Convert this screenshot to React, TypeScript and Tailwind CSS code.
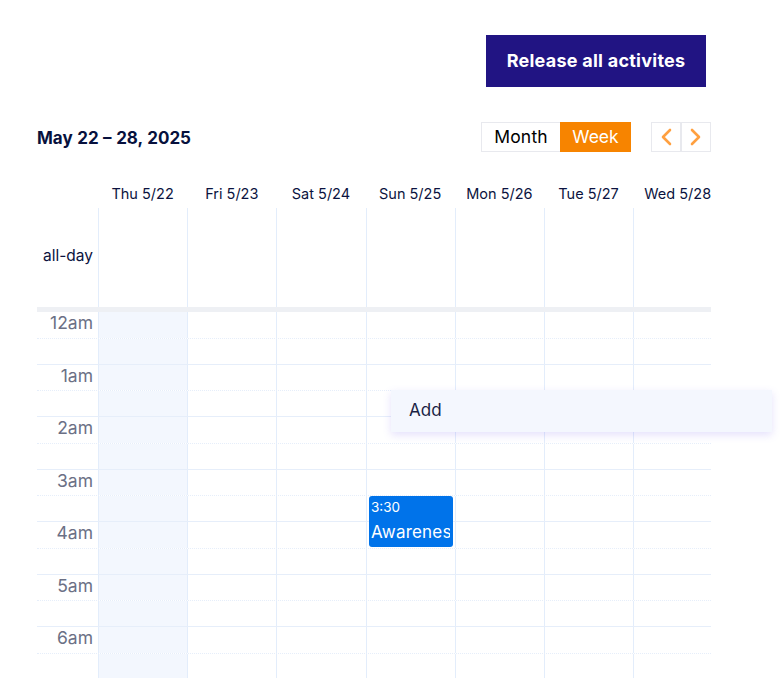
import React from "react";

const days = ["Thu 5/22", "Fri 5/23", "Sat 5/24", "Sun 5/25", "Mon 5/26", "Tue 5/27", "Wed 5/28"];
const hours = ["12am", "1am", "2am", "3am", "4am", "5am", "6am"];
const gridCols = "grid grid-cols-[61px_repeat(7,89.2px)]";

function Chevron({ dir }: { dir: "left" | "right" }) {
  return (
    <svg width="12" height="18" viewBox="0 0 12 18" fill="none">
      <path
        d={dir === "left" ? "M10 2 L3 9 L10 16" : "M2 2 L9 9 L2 16"}
        stroke="#ffa040"
        strokeWidth="2.6"
        strokeLinecap="round"
        strokeLinejoin="round"
      />
    </svg>
  );
}

function SlotRow({ label, minor }: { label?: string; minor: boolean }) {
  return (
    <div
      className={`${gridCols} box-border border-b ${
        minor ? "h-[26.5px] border-dotted border-[#e6eefa]" : "h-[26px] border-solid border-[#e6eefa]"
      }`}
    >
      <div className="pr-[5px] text-right text-[17.5px] leading-[22px] text-[#6b7085]">{label}</div>
      {days.map((d, i) => (
        <div key={d} className={`border-l border-[#e3edfb] ${i === 0 ? "bg-[#f3f7fe]" : ""}`} />
      ))}
    </div>
  );
}

export default function App() {
  return (
    <div className="relative h-[678px] w-[780px] overflow-hidden bg-white font-['Inter',sans-serif] text-[#0b1340]">
      <div className="pl-[37px] pr-[69px] pt-[35px]">
        <div className="flex justify-end pr-[5px]">
          <button className="h-[52px] w-[220px] bg-[#211483] pb-[2px] text-[18px] font-bold tracking-[0.25px] text-white">
            Release all activites
          </button>
        </div>

        <div className="mt-[35px] flex h-[30px] items-center justify-between">
          <h2 className="pt-[2px] text-[17px] font-bold leading-[26px] [word-spacing:0.5px] text-[#07113d]">
            May 22 – 28, 2025
          </h2>
          <div className="flex items-center">
            <div className="flex h-[30px]">
              <div className="flex w-[79px] items-center justify-center border border-r-0 border-[#e8e9ee] text-[17.5px] tracking-[0.2px] text-black">
                Month
              </div>
              <div className="flex w-[71px] items-center justify-center bg-[#f78400] text-[17.5px] text-white">
                Week
              </div>
            </div>
            <div className="ml-[20px] flex h-[30px]">
              <div className="flex w-[30px] items-center justify-center border border-[#e8e9ee]">
                <Chevron dir="left" />
              </div>
              <div className="flex w-[30px] items-center justify-center border border-[#e8e9ee]">
                <Chevron dir="right" />
              </div>
            </div>
          </div>
        </div>

        <div className="mt-[28px] w-[674px] overflow-hidden">
          <div className={`${gridCols} h-[28px]`}>
            <div />
            {days.map((d) => (
              <div key={d} className="flex items-center justify-center whitespace-nowrap text-[14.5px]">
                {d}
              </div>
            ))}
          </div>
          <div className={`${gridCols} h-[99px]`}>
            <div className="flex items-center justify-end pb-[4px] pr-[5px] text-[15.5px]">all-day</div>
            {days.map((d) => (
              <div key={d} className="border-l border-[#e3edfb]" />
            ))}
          </div>
          <div className="h-[5px] bg-[#eef0f4]" />
          <div className="pt-[0.4px]">
            {hours.map((h) => (
              <React.Fragment key={h}>
                <SlotRow label={h} minor />
                <SlotRow minor={false} />
              </React.Fragment>
            ))}
          </div>
        </div>
      </div>

      <div className="absolute left-[369px] top-[496px] h-[51px] w-[84px] rounded-[3px] bg-[#0073ea] pl-[2px] pr-[3px] pt-[2px] text-white">
        <div className="text-[13.5px] leading-[18px]">3:30</div>
        <div className="mt-[4px] overflow-hidden whitespace-nowrap text-[17px] leading-[24px] tracking-[0.2px]">
          Awareness
        </div>
      </div>

      <div className="absolute left-[391px] top-[390px] flex h-[42px] w-[381px] items-start bg-[#f4f7fe] pl-[18px] pt-[8px] text-[17px] leading-[24px] text-[#1a1f45] shadow-[0_3px_8px_rgba(110,90,240,0.18)]">
        Add
      </div>
    </div>
  );
}
